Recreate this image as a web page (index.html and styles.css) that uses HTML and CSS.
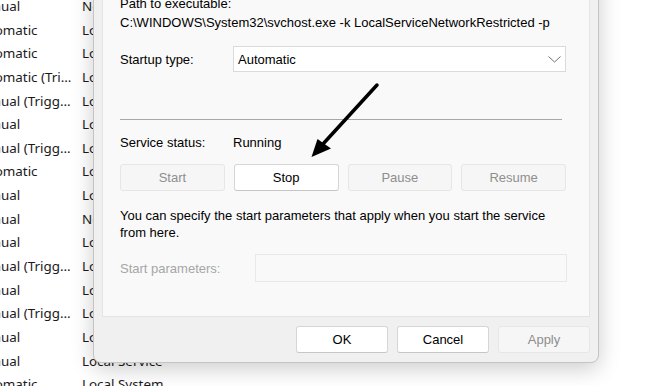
FILE: index.html
```html
<!DOCTYPE html>
<html>
<head>
  <meta charset="UTF-8">
  <title>Service Properties</title>
  <link rel="stylesheet" href="styles.css">
</head>
<body>
  <div class="services">
    <div class="svc-row"><span class="startup">Manual</span><span class="logon">Network Service</span></div>
    <div class="svc-row"><span class="startup">Automatic</span><span class="logon">Local System</span></div>
    <div class="svc-row"><span class="startup">Automatic</span><span class="logon">Local System</span></div>
    <div class="svc-row"><span class="startup">Automatic (Trigger Start)</span><span class="logon">Local System</span></div>
    <div class="svc-row"><span class="startup">Manual (Trigger Start)</span><span class="logon">Local System</span></div>
    <div class="svc-row"><span class="startup">Manual</span><span class="logon">Local System</span></div>
    <div class="svc-row"><span class="startup">Manual (Trigger Start)</span><span class="logon">Local Service</span></div>
    <div class="svc-row"><span class="startup">Automatic</span><span class="logon">Local System</span></div>
    <div class="svc-row"><span class="startup">Manual</span><span class="logon">Local System</span></div>
    <div class="svc-row"><span class="startup">Manual</span><span class="logon">Network Service</span></div>
    <div class="svc-row"><span class="startup">Manual</span><span class="logon">Local System</span></div>
    <div class="svc-row"><span class="startup">Manual (Trigger Start)</span><span class="logon">Local Service</span></div>
    <div class="svc-row"><span class="startup">Manual</span><span class="logon">Local System</span></div>
    <div class="svc-row"><span class="startup">Manual (Trigger Start)</span><span class="logon">Local System</span></div>
    <div class="svc-row"><span class="startup">Manual</span><span class="logon">Local System</span></div>
    <div class="svc-row"><span class="startup">Manual</span><span class="logon">Local Service</span></div>
    <div class="svc-row"><span class="startup">Automatic</span><span class="logon">Local System</span></div>
  </div>

  <div class="dialog">
    <div class="tab-panel">
      <div class="field-label">Path to executable:</div>
      <div class="path">C:\WINDOWS\System32\svchost.exe -k LocalServiceNetworkRestricted -p</div>

      <div class="form-row startup-row">
        <span class="row-label">Startup type:</span>
        <div class="combo">
          <span>Automatic</span>
          <svg class="chevron" width="13" height="7" viewBox="0 0 13 7">
            <polyline points="0.5,0.5 6.5,6 12.5,0.5" fill="none" stroke="#707070" stroke-width="1"/>
          </svg>
        </div>
      </div>

      <div class="separator"></div>

      <div class="form-row status-row">
        <span class="row-label">Service status:</span>
        <span>Running</span>
      </div>

      <div class="svc-buttons">
        <button class="btn" disabled>Start</button>
        <button class="btn">Stop</button>
        <button class="btn" disabled>Pause</button>
        <button class="btn" disabled>Resume</button>
      </div>

      <p class="hint">You can specify the start parameters that apply when you start the service from here.</p>

      <div class="form-row params-row">
        <span class="row-label params-label">Start parameters:</span>
        <div class="text-input"></div>
      </div>
    </div>

    <div class="dialog-buttons">
      <button class="btn">OK</button>
      <button class="btn">Cancel</button>
      <button class="btn" disabled>Apply</button>
    </div>
  </div>

  <!-- annotation arrow pointing at Stop -->
  <svg class="arrow" width="647" height="386" viewBox="0 0 647 386">
    <line x1="377" y1="85" x2="323" y2="144" stroke="#000" stroke-width="3.5" stroke-linecap="round"/>
    <polygon points="311.5,157 317.5,139 331,148.5" fill="#000"/>
  </svg>
</body>
</html>
```

FILE: styles.css
```css
body { margin: 0; padding: 0; background: #fff; color: #000; overflow: hidden; width: 647px; height: 386px; position: relative; }

.services { margin-top: -5px; font-family: "Noto Sans", sans-serif; font-size: 13.4px; color: #1a1a1a; }
.svc-row { display: flex; height: 23.65px; line-height: 23.65px; white-space: nowrap; }
.svc-row .startup { width: 100px; margin-left: -27px; padding-right: 9px; overflow: hidden; text-overflow: ellipsis; }

.dialog {
  position: absolute;
  left: 93px;
  top: -40px;
  width: 506px;
  height: 403px;
  box-sizing: border-box;
  background: #f0f0f0;
  border: 1px solid #c4c4c4;
  border-radius: 0 0 8px 8px;
  box-shadow: 0 6px 22px rgba(0,0,0,0.2);
  padding: 8px 8px 9px 8px;
  font-family: "Liberation Sans", Arial, sans-serif;
  font-size: 13px;
  color: #000;
}
.tab-panel {
  background: #f9f9f9;
  border: 1px solid #e4e4e4;
  height: 348px;
  box-sizing: border-box;
  padding: 26px 23px 0 17px;
}
.field-label, .path { line-height: 16px; }
.path { margin-top: 3px; }

.form-row { display: flex; align-items: center; }
.row-label { width: 113px; flex: none; }
.startup-row { margin-top: 15px; }
.combo {
  flex: 1;
  height: 26px;
  box-sizing: border-box;
  background: #fff;
  border: 1px solid #dadada;
  display: flex;
  align-items: center;
  padding: 0 4px 0 4px;
}
.combo .chevron { margin-left: auto; }

.separator { margin-top: 47px; width: 442px; height: 1px; background: #a7a7a7; }

.status-row { margin-top: 15px; line-height: 16px; }

.svc-buttons { margin-top: 13px; display: grid; grid-template-columns: repeat(4, 1fr); gap: 9px; }

.btn {
  height: 27px;
  font-family: "Liberation Sans", Arial, sans-serif;
  font-size: 13px;
  color: #000;
  background: #fff;
  border: 1px solid #d6d6d6;
  border-bottom-color: #c6c6c6;
  border-radius: 3px;
  padding: 0;
}
.btn:disabled { background: #f6f6f6; border-color: #e6e6e6; color: #8e8e8e; }

.hint { margin: 17px 0 0; line-height: 16.5px; }

.params-row { margin-top: 13px; }
.params-label { width: 135px; color: #a6a6a6; }
.text-input { flex: 1; height: 28px; box-sizing: border-box; background: #f9f9f9; border: 1px solid #e8e8e8; margin-right: -1px; }

.dialog-buttons { display: flex; justify-content: flex-end; gap: 9px; margin-top: 9px; }
.dialog-buttons .btn { width: 92px; height: 27px; }

.arrow { position: absolute; left: 0; top: 0; pointer-events: none; }
```
